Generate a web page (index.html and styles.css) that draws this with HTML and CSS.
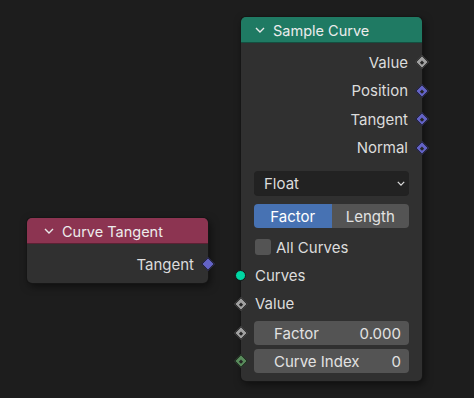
FILE: index.html
```html
<!DOCTYPE html>
<html lang="en">
  <head>
    <meta charset="UTF-8" />
    <title>Sample Curve</title>
    <link rel="stylesheet" href="styles.css">
  </head>
  <body>
    <div class="canvas">
      <!-- Curve Tangent node -->
      <div class="node node-tangent">
        <div class="node-header header-red">
          <svg class="chevron" viewBox="0 0 10 6"><polyline points="1,1 5,5 9,1" /></svg>
          Curve Tangent
        </div>
        <div class="node-body body-tangent">
          <div class="row row-out">
            Tangent
            <span class="socket diamond vector solid out"></span>
          </div>
        </div>
      </div>

      <!-- Sample Curve node -->
      <div class="node node-sample">
        <div class="node-header header-green">
          <svg class="chevron" viewBox="0 0 10 6"><polyline points="1,1 5,5 9,1" /></svg>
          Sample Curve
        </div>
        <div class="node-body body-sample">
          <div class="outputs">
            <div class="row row-out">Value<span class="socket diamond float out"></span></div>
            <div class="row row-out">Position<span class="socket diamond vector out"></span></div>
            <div class="row row-out">Tangent<span class="socket diamond vector out"></span></div>
            <div class="row row-out">Normal<span class="socket diamond vector out"></span></div>
          </div>

          <div class="dropdown">
            <span>Float</span>
            <svg class="dd-arrow" viewBox="0 0 10 6"><polyline points="1,1 5,5 9,1" /></svg>
          </div>

          <div class="tabs">
            <div class="tab active">Factor</div>
            <div class="tab">Length</div>
          </div>

          <div class="check-row">
            <span class="checkbox"></span>
            All Curves
          </div>

          <div class="row row-in">
            <span class="socket circle geometry in"></span>
            Curves
          </div>
          <div class="row row-in">
            <span class="socket diamond float in"></span>
            Value
          </div>

          <div class="field-row field-first">
            <span class="socket diamond float in"></span>
            <div class="field"><span>Factor</span><span>0.000</span></div>
          </div>
          <div class="field-row">
            <span class="socket diamond int in"></span>
            <div class="field"><span>Curve Index</span><span>0</span></div>
          </div>
        </div>
      </div>
    </div>
  </body>
</html>
```

FILE: styles.css
```css
html,
body {
  margin: 0;
  height: 100%;
}

body {
  background: #1d1d1d;
  font-family: Inter, "DejaVu Sans", sans-serif;
  font-size: 15px;
  color: #dcdcdc;
  overflow: hidden;
}

.canvas {
  position: relative;
  width: 474px;
  height: 398px;
}

/* nodes sit on a free canvas */
.node {
  position: absolute;
  width: 181px;
  background: #303030;
  border-radius: 5px;
  box-shadow: 0 0 0 1px #161616, 2px 3px 8px rgba(0, 0, 0, 0.55);
}

.node-tangent {
  left: 27px;
  top: 218px;
}

.node-sample {
  left: 241px;
  top: 17px;
}

.node-header {
  height: 26px;
  display: flex;
  align-items: center;
  border-radius: 5px 5px 0 0;
  color: #ececec;
  font-size: 14.5px;
  box-shadow: inset 0 -1px 0 rgba(0, 0, 0, 0.35);
}

.header-red {
  background: #8c3451;
  padding-left: 17px;
}

.header-green {
  background: #1f7a63;
  padding-left: 14px;
}

.chevron {
  width: 10px;
  height: 6px;
  margin-right: 8px;
  fill: none;
  stroke: #e8e8e8;
  stroke-width: 1.4;
}

.body-tangent {
  padding: 6px 0 4px;
}

.body-sample {
  padding: 5px 0 8px;
}

.row {
  position: relative;
  height: 28.5px;
  display: flex;
  align-items: center;
}

.row-out {
  justify-content: flex-end;
  padding-right: 14px;
}

.row-in {
  padding-left: 14px;
}

/* sockets */
.socket {
  position: absolute;
  top: 50%;
  box-sizing: border-box;
}

.socket.out {
  right: -5px;
}

.socket.in {
  left: -5px;
}

.diamond {
  width: 10px;
  height: 10px;
  margin-top: -5px;
  transform: rotate(45deg);
  border: 1px solid #151515;
}

.diamond::after {
  content: "";
  position: absolute;
  left: 2.5px;
  top: 2.5px;
  width: 3px;
  height: 3px;
  background: #262626;
}

.diamond.solid::after {
  display: none;
}

.float {
  background: #a1a1a1;
}

.vector {
  background: #6363c7;
}

.int {
  background: #598c5c;
}

.circle {
  width: 11px;
  height: 11px;
  margin-top: -5.5px;
  border-radius: 50%;
  border: 1px solid #151515;
}

.socket.circle.in {
  left: -6px;
}

.geometry {
  background: #00d6a3;
}

/* widgets */
.dropdown {
  margin: 9px 13px 0 13px;
  height: 24px;
  background: #222222;
  border-radius: 4px;
  display: flex;
  align-items: center;
  justify-content: space-between;
  padding: 0 4px 0 10px;
  box-shadow: 0 1px 0 rgba(0, 0, 0, 0.3);
}

.dd-arrow {
  width: 8px;
  height: 5px;
  fill: none;
  stroke: #dcdcdc;
  stroke-width: 1.6;
}

.tabs {
  margin: 9px 13px 0 13px;
  height: 24px;
  display: flex;
  border-radius: 4px;
  overflow: hidden;
}

.tab {
  flex: 1;
  display: flex;
  align-items: center;
  justify-content: center;
  background: #545454;
  color: #e2e2e2;
}

.tab.active {
  background: #4772b3;
  color: #ffffff;
}

.check-row {
  margin-top: 5px;
  height: 28px;
  display: flex;
  align-items: center;
  padding-left: 14px;
}

.checkbox {
  width: 16px;
  height: 16px;
  border-radius: 3px;
  background: #545454;
  margin-right: 5px;
}

.field-row {
  position: relative;
  margin-top: 4px;
  padding: 0 13px;
}

.field-first {
  margin-top: 3px;
}

.field {
  height: 24px;
  background: #545454;
  border-radius: 4px;
  display: flex;
  align-items: center;
  justify-content: space-between;
  padding: 0 8px 0 20px;
  color: #e2e2e2;
}
```
